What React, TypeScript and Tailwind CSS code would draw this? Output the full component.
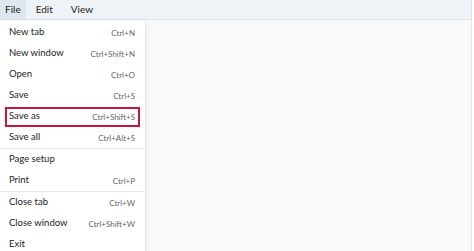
import React from "react";

type Item = {
  label: string;
  shortcut?: string;
  selected?: boolean;
};

const groups: Item[][] = [
  [
    {label: "New tab", shortcut: "Ctrl+N"},
    {label: "New window", shortcut: "Ctrl+Shift+N"},
    {label: "Open", shortcut: "Ctrl+O"},
    {label: "Save", shortcut: "Ctrl+S"},
    {label: "Save as", shortcut: "Ctrl+Shift+S", selected: true},
    {label: "Save all", shortcut: "Ctrl+Alt+S"},
  ],
  [
    {label: "Page setup"},
    {label: "Print", shortcut: "Ctrl+P"},
  ],
  [
    {label: "Close tab", shortcut: "Ctrl+W"},
    {label: "Close window", shortcut: "Ctrl+Shift+W"},
    {label: "Exit"},
  ],
];

const MenuRow: React.FunctionComponent<{item: Item}> = ({item}) => {
  return (
    <div className="h-[21px] flex items-center">
      <div className={`${item.selected ? "border-2 border-[#c8173d] mx-[5px] px-[2px]" : "mx-[5px] px-[4px]"} h-[20px] w-full flex items-center justify-between`}>
        <span className="text-[9.5px] text-[#222]">{item.label}</span>
        {item.shortcut && <span className="text-[8px] text-[#666] mr-[1px]">{item.shortcut}</span>}
      </div>
    </div>
  );
};

export default function App() {
  return (
    <div className="w-[474px] h-[251px] bg-white relative overflow-hidden" style={{fontFamily: 'Lato, "Noto Sans", sans-serif'}}>
      <div className="w-[472px] h-full flex flex-col border-r border-[#e3e3e3]">
        <div className="h-[20px] bg-[#eef3f8] border-b border-[#dfe5ec] flex items-center text-[10px] text-[#222]">
          <div className="h-full bg-[#e1e7ee] px-[5px] flex items-center">File</div>
          <div className="ml-[10px] flex items-center">Edit</div>
          <div className="ml-[18px] flex items-center">View</div>
        </div>
        <div className="flex-1 bg-[#f9f9f9]" />
      </div>

      <div className="absolute left-0 top-[21px] w-[146px] pt-[1px] bg-white border-r border-[#e6e6e6] shadow-[0_2px_6px_rgba(0,0,0,0.08)]">
        {groups.map((group, gi) => (
          <div key={gi}>
            {gi > 0 && <div className="h-px bg-[#e8e8e8]" />}
            {group.map((item) => <MenuRow key={item.label} item={item} />)}
          </div>
        ))}
      </div>
    </div>
  );
}
